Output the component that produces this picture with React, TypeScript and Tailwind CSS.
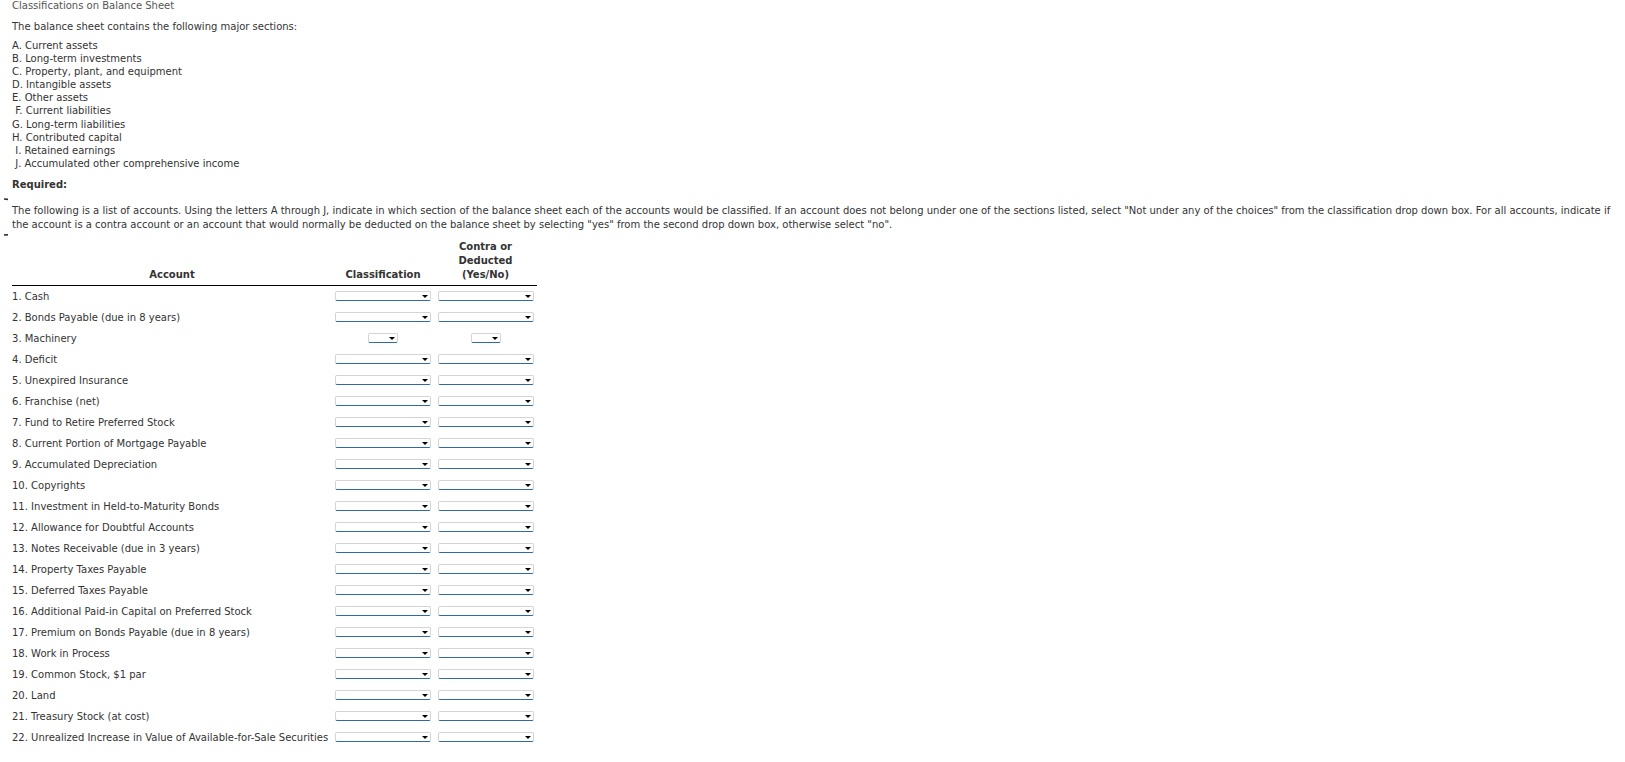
const sections = [
  "A. Current assets",
  "B. Long-term investments",
  "C. Property, plant, and equipment",
  "D. Intangible assets",
  "E. Other assets",
  "\u00a0F. Current liabilities",
  "G. Long-term liabilities",
  "H. Contributed capital",
  "\u00a0I. Retained earnings",
  "\u00a0J. Accumulated other comprehensive income",
];

const accounts = [
  "Cash",
  "Bonds Payable (due in 8 years)",
  "Machinery",
  "Deficit",
  "Unexpired Insurance",
  "Franchise (net)",
  "Fund to Retire Preferred Stock",
  "Current Portion of Mortgage Payable",
  "Accumulated Depreciation",
  "Copyrights",
  "Investment in Held-to-Maturity Bonds",
  "Allowance for Doubtful Accounts",
  "Notes Receivable (due in 3 years)",
  "Property Taxes Payable",
  "Deferred Taxes Payable",
  "Additional Paid-in Capital on Preferred Stock",
  "Premium on Bonds Payable (due in 8 years)",
  "Work in Process",
  "Common Stock, $1 par",
  "Land",
  "Treasury Stock (at cost)",
  "Unrealized Increase in Value of Available-for-Sale Securities",
];

const Drop = ({ small }: { small?: boolean }) => (
  <div
    className={`relative h-[10px] border border-[#d4d4d4] border-b-[#2f6aa3] rounded-[2px] bg-white ${small ? "w-[30px]" : "w-[96px]"}`}
  >
    <span className="absolute right-[2px] top-[3px] w-0 h-0 border-l-[3px] border-r-[3px] border-t-[3px] border-l-transparent border-r-transparent border-t-black" />
  </div>
);

export default function App() {
  return (
    <div className="relative min-h-[762px] bg-white text-[10px] text-[#333] pl-[12px] pt-[0px]" style={{ fontFamily: "'DejaVu Sans', Verdana, sans-serif" }}>
      <div className="text-[#555] leading-[12px]">Classifications on Balance Sheet</div>
      <div className="mt-[9px] leading-[12px]">The balance sheet contains the following major sections:</div>
      <div className="mt-[6px] leading-[13.1px]">
        {sections.map((s) => (
          <div key={s}>{s}</div>
        ))}
      </div>
      <div className="mt-[9px] font-bold leading-[12px]">Required:</div>
      <svg className="absolute left-0 top-[198px]" width="8" height="38" viewBox="0 0 8 38">
        <path d="M-14 1 A18 18 0 0 1 -14 37" fill="none" stroke="#333" strokeWidth="1.6" transform="translate(18 0)" />
      </svg>
      <div className="mt-[13px] leading-[14px] pr-[4px]">
        The following is a list of accounts. Using the letters A through J, indicate in which section of the balance sheet each of the accounts would be classified. If an account does not belong under one of the sections listed, select "Not under any of the choices" from the classification drop down box. For all accounts, indicate if the account is a contra account or an account that would normally be deducted on the balance sheet by selecting "yes" from the second drop down box, otherwise select "no".
      </div>
      <div className="w-[525px] mt-[8px]">
        <div className="flex items-end font-bold border-b-[1.5px] border-black pb-[3px] leading-[14px]">
          <div className="w-[320px] text-center">Account</div>
          <div className="w-[102px] text-center">Classification</div>
          <div className="w-[103px] text-center">Contra or<br />Deducted (Yes/No)</div>
        </div>
        {accounts.map((a, i) => (
          <div key={a} className="flex items-center h-[21px] mt-[0px] first:mt-[1px]">
            <div className="w-[320px] whitespace-nowrap">{i + 1}. {a}</div>
            <div className="w-[102px] flex justify-center">
              <Drop small={i === 2} />
            </div>
            <div className="w-[103px] flex justify-center">
              <Drop small={i === 2} />
            </div>
          </div>
        ))}
      </div>
    </div>
  );
}
